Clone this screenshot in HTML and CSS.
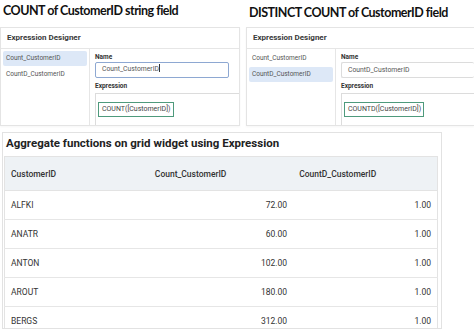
FILE: index.html
```html
<!DOCTYPE html>
<html lang="en">
<head>
  <meta charset="UTF-8" />
  <title>Aggregate functions using Expression</title>
  <link rel="stylesheet" href="styles.css">
</head>
<body>

  <div class="top">
    <!-- left screenshot: COUNT -->
    <section class="shot shot-left">
      <h1 class="shot-title">COUNT of CustomerID string field</h1>
      <div class="designer">
        <div class="designer-head">Expression Designer</div>
        <div class="designer-body">
          <ul class="field-list">
            <li class="selected">Count_CustomerID</li>
            <li>CountD_CustomerID</li>
          </ul>
          <div class="field-form">
            <div class="form-label">Name</div>
            <div class="name-input active">Count_CustomerID<span class="caret"></span></div>
            <div class="form-label">Expression</div>
            <div class="expr-area"><span class="expr-box">COUNT([CustomerID])</span></div>
          </div>
        </div>
      </div>
    </section>

    <!-- right screenshot: DISTINCT COUNT -->
    <section class="shot shot-right">
      <h1 class="shot-title">DISTINCT COUNT of CustomerID field</h1>
      <div class="designer">
        <div class="designer-head">Expression Designer</div>
        <div class="designer-body">
          <ul class="field-list">
            <li>Count_CustomerID</li>
            <li class="selected">CountD_CustomerID</li>
          </ul>
          <div class="field-form">
            <div class="form-label">Name</div>
            <div class="name-input">CountD_CustomerID</div>
            <div class="form-label">Expression</div>
            <div class="expr-area"><span class="expr-box">COUNTD([CustomerID])</span></div>
          </div>
        </div>
      </div>
    </section>
  </div>

  <div class="grid-card">
    <h2 class="card-title">Aggregate functions on grid widget using Expression</h2>
    <table class="grid">
      <thead>
        <tr>
          <th>CustomerID</th>
          <th>Count_CustomerID</th>
          <th>CountD_CustomerID</th>
        </tr>
      </thead>
      <tbody>
        <tr><td>ALFKI</td><td class="num">72.00</td><td class="num">1.00</td></tr>
        <tr><td>ANATR</td><td class="num">60.00</td><td class="num">1.00</td></tr>
        <tr><td>ANTON</td><td class="num">102.00</td><td class="num">1.00</td></tr>
        <tr><td>AROUT</td><td class="num">180.00</td><td class="num">1.00</td></tr>
        <tr><td>BERGS</td><td class="num">312.00</td><td class="num">1.00</td></tr>
      </tbody>
    </table>
  </div>

</body>
</html>
```

FILE: styles.css
```css
body {
  margin: 0;
  background: #fff;
  color: #333;
  font-family: Roboto, 'Liberation Sans', sans-serif;
  overflow: hidden;
}

.top {
  display: flex;
  gap: 6px;
}

.shot-left {
  width: 240px;
  flex: none;
}

.shot-right {
  flex: 1;
  min-width: 0;
}

.shot-title {
  margin: 0;
  height: 27px;
  padding: 3px 0 0 3px;
  box-sizing: border-box;
  font-family: Lato, 'Open Sans', sans-serif;
  font-weight: 700;
  font-size: 12.5px;
  letter-spacing: -0.5px;
  line-height: 15px;
  color: #111;
  white-space: nowrap;
}

.shot-right .shot-title {
  padding-top: 5px;
}

.designer {
  height: 99px;
  border: 1px solid #e4e4e4;
  box-sizing: border-box;
  display: flex;
  flex-direction: column;
  box-shadow: 0 1px 2px rgba(0,0,0,0.04);
}

.shot-right .designer {
  border-right: none;
}

.designer-head {
  height: 20px;
  flex: none;
  padding-left: 6px;
  border-bottom: 1px solid #e6e6e6;
  font-size: 8px;
  font-weight: 700;
  line-height: 19px;
  color: #3a3a3a;
}

.designer-body {
  flex: 1;
  display: flex;
}

.field-list {
  list-style: none;
  margin: 0;
  padding: 2px 2px 0 2px;
  width: 89px;
  box-sizing: border-box;
  border-right: 1px solid #e6e6e6;
}

.field-list li {
  height: 15px;
  line-height: 15px;
  padding-left: 3px;
  font-size: 6.5px;
  color: #555;
  border-radius: 2px;
  margin-bottom: 1px;
}

.field-list li.selected {
  background: #dde8f7;
}

.field-form {
  flex: 1;
  display: flex;
  flex-direction: column;
  padding: 4px 0 0 5px;
}

.form-label {
  font-size: 6.5px;
  font-weight: 700;
  line-height: 8px;
  color: #333;
}

.name-input {
  width: 134px;
  height: 16px;
  margin: 1px 0 4px;
  box-sizing: border-box;
  border: 1px solid #dcdcdc;
  border-radius: 2px;
  padding-left: 6px;
  font-size: 6.8px;
  line-height: 14px;
  color: #555;
}

.shot-right .name-input {
  width: auto;
  border-right: none;
}

.name-input.active {
  border: 1.5px solid #8ea8d2;
  line-height: 13px;
}

.caret {
  display: inline-block;
  width: 1px;
  height: 8px;
  background: #333;
  vertical-align: -1px;
}

.expr-area {
  flex: 1;
  margin-top: 3px;
  border-top: 1px solid #dcdcdc;
  border-left: 1px solid #dcdcdc;
  padding: 2px 0 0 2px;
}

.expr-box {
  display: inline-block;
  height: 15px;
  box-sizing: border-box;
  padding: 0 2px 0 3px;
  border: 1.5px solid #4e9a7c;
  font-size: 7px;
  line-height: 12px;
  color: #444;
}

.grid-card {
  margin: 6px 0 0 2px;
  width: 440px;
  height: 197px;
  box-sizing: border-box;
  border: 1px solid #e2e2e2;
  padding: 0 4px 0 1px;
  overflow: hidden;
}

.card-title {
  margin: 0;
  padding: 3px 0 0 2px;
  height: 23px;
  box-sizing: border-box;
  font-size: 11.5px;
  font-weight: 700;
  line-height: 15px;
  color: #222;
  white-space: nowrap;
}

.grid {
  width: 434px;
  border-collapse: collapse;
  border: 1px solid #e3e3e3;
  table-layout: fixed;
  font-size: 8.5px;
  color: #333;
}

.grid th {
  height: 33px;
  background: #eef2f5;
  text-align: left;
  font-weight: 500;
  padding: 0 6px;
  border-bottom: 1px solid #e3e3e3;
}

.grid td {
  height: 28px;
  padding: 0 6px;
  border-top: 1px solid #e6e6e6;
}

.grid td.num {
  text-align: right;
}
```
